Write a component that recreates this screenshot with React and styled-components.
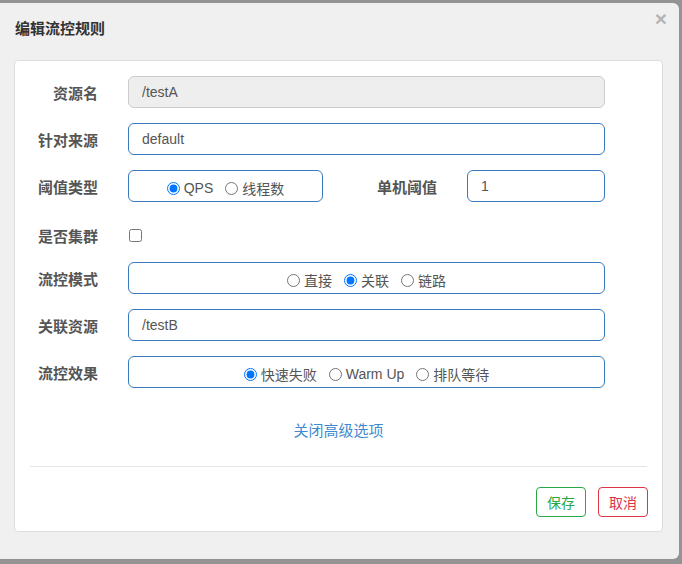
import React, {useState} from 'react';
import styled, {createGlobalStyle} from 'styled-components';

const GlobalStyle = createGlobalStyle`
  html, body {
    margin: 0;
    padding: 0;
    background: #939393;
    overflow: hidden;
  }
  body {
    font-family: "Liberation Sans", "Noto Sans CJK SC", sans-serif;
  }
`;

const Screen = styled.div`
  width: 682px;
  height: 564px;
  overflow: hidden;
`;

const Dialog = styled.div`
  width: 685px;
  height: 556px;
  margin: 3px 0 0 -6px;
  background: #f0f0f0;
  border-radius: 6px;
  display: flex;
  flex-direction: column;
`;

const Header = styled.div`
  height: 57px;
  box-sizing: border-box;
  padding: 17px 12px 0 21px;
  display: flex;
  justify-content: space-between;
  align-items: flex-start;
`;

const Title = styled.h4`
  margin: 0;
  font-size: 15px;
  line-height: 18px;
  font-weight: 700;
  color: #333;
`;

const Close = styled.span`
  margin-top: -12px;
  font-size: 21px;
  line-height: 1;
  font-weight: 700;
  color: #b4b4b4;
  cursor: pointer;
`;

const Panel = styled.div`
  height: 472px;
  box-sizing: border-box;
  margin: 0 16px 0 20px;
  padding-top: 15px;
  background: #fff;
  border: 1px solid #ddd;
  border-radius: 4px;
  display: flex;
  flex-direction: column;
`;

const Row = styled.div`
  display: grid;
  grid-template-columns: 83px 477px;
  column-gap: 30px;
  align-items: center;
  margin-bottom: 15px;
  height: ${p => (p.$short ? '30px' : '32px')};
  padding-top: ${p => (p.$short ? '6px' : '0')};
  box-sizing: border-box;
`;

const Label = styled.label`
  text-align: right;
  font-size: 15px;
  font-weight: 700;
  color: #555;
  white-space: nowrap;
`;

const Input = styled.input`
  width: ${p => p.$width || '100%'};
  height: 32px;
  box-sizing: border-box;
  padding: 0 13px;
  border: 1px solid ${p => (p.disabled ? '#ccc' : '#3a7bbd')};
  border-radius: 6px;
  background: ${p => (p.disabled ? '#eee' : '#fff')};
  font-family: "Liberation Sans", "Noto Sans CJK SC", sans-serif;
  font-size: 14px;
  color: #555;
  outline: none;
`;

const Split = styled.div`
  display: flex;
  align-items: center;
`;

const SubLabel = styled(Label)`
  flex: 1;
  margin-right: 30px;
`;

const RadioBox = styled.div`
  width: ${p => p.$width || '100%'};
  height: 32px;
  box-sizing: border-box;
  padding-top: 4px;
  border: 1px solid #3a7bbd;
  border-radius: 6px;
  display: flex;
  justify-content: center;
  align-items: center;
  gap: 12px;
`;

const Option = styled.label`
  display: inline-flex;
  align-items: center;
  gap: 4px;
  font-size: 14px;
  color: #555;
  cursor: pointer;

  input {
    margin: 0;
    width: 13px;
    height: 13px;
  }
`;

const Check = styled.input`
  margin: 0 0 0 1px;
  width: 13px;
  height: 13px;
`;

const Toggle = styled.div`
  padding-top: 16px;
  text-align: center;
  font-size: 15px;
  line-height: 24px;
  color: #3f8ad0;
  cursor: pointer;
`;

const Rule = styled.hr`
  margin: 23px 15px 20px;
  border: 0;
  border-top: 1px solid #e5e5e5;
`;

const Footer = styled.div`
  display: flex;
  justify-content: flex-end;
  gap: 12px;
  padding-right: 14px;
`;

const Button = styled.button`
  height: 30px;
  padding: 0 10px;
  background: #fff;
  border: 1px solid ${p => p.$color};
  border-radius: 4px;
  color: ${p => p.$color};
  font-family: "Liberation Sans", "Noto Sans CJK SC", sans-serif;
  font-size: 14px;
  cursor: pointer;
`;

const RadioGroup = ({name, options, value, onChange, width}) => (
  <RadioBox $width={width}>
    {options.map((o) => (
      <Option key={o}>
        <input type="radio" name={name} checked={value === o} onChange={() => onChange(o)} />
        {o}
      </Option>
    ))}
  </RadioBox>
);

const App = () => {
  const [grade, setGrade] = useState('QPS');
  const [strategy, setStrategy] = useState('关联');
  const [behavior, setBehavior] = useState('快速失败');

  return (
    <Screen>
      <GlobalStyle />
      <Dialog>
        <Header>
          <Title>编辑流控规则</Title>
          <Close>×</Close>
        </Header>

        <Panel>
          <Row>
            <Label>资源名</Label>
            <Input disabled defaultValue="/testA" />
          </Row>
          <Row>
            <Label>针对来源</Label>
            <Input defaultValue="default" />
          </Row>
          <Row>
            <Label>阈值类型</Label>
            <Split>
              <RadioGroup
                name="grade"
                width="195px"
                options={['QPS', '线程数']}
                value={grade}
                onChange={setGrade}
              />
              <SubLabel>单机阈值</SubLabel>
              <Input $width="138px" defaultValue="1" />
            </Split>
          </Row>
          <Row $short>
            <Label>是否集群</Label>
            <Check type="checkbox" />
          </Row>
          <Row>
            <Label>流控模式</Label>
            <RadioGroup
              name="strategy"
              options={['直接', '关联', '链路']}
              value={strategy}
              onChange={setStrategy}
            />
          </Row>
          <Row>
            <Label>关联资源</Label>
            <Input defaultValue="/testB" />
          </Row>
          <Row>
            <Label>流控效果</Label>
            <RadioGroup
              name="behavior"
              options={['快速失败', 'Warm Up', '排队等待']}
              value={behavior}
              onChange={setBehavior}
            />
          </Row>

          <Toggle>关闭高级选项</Toggle>
          <Rule />

          <Footer>
            <Button $color="#28a745">保存</Button>
            <Button $color="#dc3545">取消</Button>
          </Footer>
        </Panel>
      </Dialog>
    </Screen>
  );
};

export default App;
